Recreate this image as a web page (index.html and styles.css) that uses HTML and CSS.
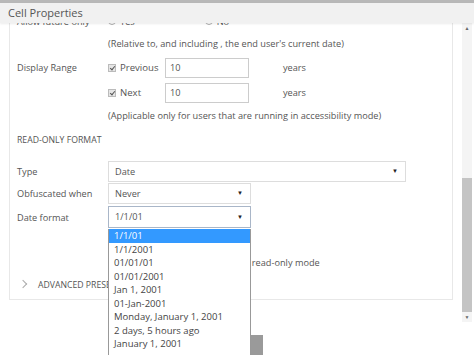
FILE: index.html
```html
<!DOCTYPE html>
<html lang="en">
<head>
    <meta charset="UTF-8">
    <title>Cell Properties</title>
    <link rel="stylesheet" href="styles.css">
</head>
<body>
    <div class="top-strip"></div>
    <div class="dialog-title">Cell Properties</div>

    <div class="main">
        <div class="scroll-area">
            <div class="panel">
                <div class="row row-cut">
                    <div class="label">Allow future only</div>
                    <div class="control">
                        <span class="radio"></span> Yes
                        <span class="radio radio-no"></span> No
                    </div>
                </div>
                <div class="row note">
                    <div class="label"></div>
                    <div class="control">(Relative to, and including , the end user's current date)</div>
                </div>
                <div class="row row-input">
                    <div class="label">Display Range</div>
                    <div class="control">
                        <span class="check"></span>
                        <span class="check-text">Previous</span>
                        <input class="num" type="text" value="10">
                        <span class="unit">years</span>
                    </div>
                </div>
                <div class="row row-input">
                    <div class="label"></div>
                    <div class="control">
                        <span class="check"></span>
                        <span class="check-text">Next</span>
                        <input class="num" type="text" value="10">
                        <span class="unit">years</span>
                    </div>
                </div>
                <div class="row note note-short">
                    <div class="label"></div>
                    <div class="control">(Applicable only for users that are running in accessibility mode)</div>
                </div>
                <div class="row heading">READ-ONLY FORMAT</div>
                <div class="row row-select first-select">
                    <div class="label">Type</div>
                    <div class="control">
                        <div class="select wide">Date <span class="arrow">&#9660;</span></div>
                    </div>
                </div>
                <div class="row row-select">
                    <div class="label">Obfuscated when</div>
                    <div class="control">
                        <div class="select">Never <span class="arrow">&#9660;</span></div>
                    </div>
                </div>
                <div class="row row-select date-row">
                    <div class="label">Date format</div>
                    <div class="control dropdown-host">
                        <div class="select focused">1/1/01 <span class="arrow">&#9660;</span></div>
                        <ul class="dropdown">
                            <li class="selected">1/1/01</li>
                            <li>1/1/2001</li>
                            <li>01/01/01</li>
                            <li>01/01/2001</li>
                            <li>Jan 1, 2001</li>
                            <li>01-Jan-2001</li>
                            <li>Monday, January 1, 2001</li>
                            <li>2 days, 5 hours ago</li>
                            <li>January 1, 2001</li>
                        </ul>
                    </div>
                </div>
                <div class="row row-readonly">
                    <div class="label"></div>
                    <div class="control"><span class="check"></span> Show time zone of end user in read-only mode</div>
                </div>
                <div class="row advanced">
                    <span class="chevron"></span>
                    ADVANCED PRESENTATION
                </div>
            </div>
            <div class="footer">
                <button class="btn"></button>
            </div>
        </div>

        <div class="scrollbar">
            <div class="sb-arrow">&#9650;</div>
            <div class="sb-track"><div class="sb-thumb"></div></div>
            <div class="sb-arrow">&#9660;</div>
        </div>
    </div>
</body>
</html>
```

FILE: styles.css
```css
* {
    margin: 0;
    padding: 0;
    box-sizing: border-box;
}

body {
    font-family: "Open Sans", Arial, sans-serif;
    font-size: 9.2px;
    color: #555;
    background: white;
    width: 474px;
    height: 355px;
    overflow: hidden;
}

.top-strip {
    height: 3px;
    background: #b8b8b8;
}

.dialog-title {
    position: relative;
    z-index: 2;
    height: 20px;
    line-height: 20px;
    padding-left: 8px;
    font-size: 11px;
    color: #555;
    background: #f1f1f1;
    box-shadow: 0 1px 2px rgba(0, 0, 0, 0.08);
}

.main {
    display: flex;
    height: 332px;
}

.scroll-area {
    width: 461px;
    overflow: hidden;
}

.panel {
    margin: -13px 0 0 9px;
    width: 444px;
    border: 1px solid #e8e8e8;
    border-top: none;
    padding-left: 7px;
}

.row {
    display: flex;
    align-items: center;
}

.label {
    width: 91px;
    flex-shrink: 0;
}

.control {
    display: flex;
    align-items: center;
}

.row-cut { height: 22px; }
.note { height: 23px; }
.note-short { height: 20px; }
.row-input { height: 25px; }
.heading { height: 30px; font-size: 8.7px; }
.row-select { height: 23px; }
.first-select { height: 22px; margin-top: 5px; }
.date-row { height: 24px; }

.radio {
    display: inline-block;
    width: 8px;
    height: 8px;
    border: 1px solid #aaa;
    border-radius: 50%;
    margin-right: 4px;
}

.radio-no { margin-left: 70px; }

.check {
    display: inline-block;
    width: 8px;
    height: 8px;
    margin-right: 4px;
    border: 1px solid #bbb;
    background: #e6e6e6;
    position: relative;
}

.check::after {
    content: "";
    position: absolute;
    left: 2px;
    top: 0;
    width: 2px;
    height: 4px;
    border: solid #555;
    border-width: 0 1.5px 1.5px 0;
    transform: rotate(40deg);
}

.check-text {
    min-width: 45px;
    font-size: 9.6px;
}

.num {
    width: 84px;
    height: 20px;
    border: 1px solid #ccc;
    padding-left: 4px;
    font-family: inherit;
    font-size: 9.2px;
    color: #555;
}

.unit {
    margin-left: 34px;
}

.select {
    position: relative;
    width: 143px;
    height: 21px;
    line-height: 19px;
    border: 1px solid #ddd;
    padding-left: 6px;
    color: #555;
}

.select.wide { width: 298px; }

.select.focused {
    height: 22px;
    line-height: 20px;
    border-color: #a9b6c8;
}

.arrow {
    position: absolute;
    right: 7px;
    top: 0;
    font-size: 6px;
    color: #222;
}

.dropdown-host { position: relative; }

.dropdown {
    position: absolute;
    z-index: 3;
    left: 0;
    top: 23px;
    width: 143px;
    padding-bottom: 12px;
    list-style: none;
    background: white;
    border: 1px solid #999;
    border-top: none;
    font-size: 9.5px;
    color: #444;
}

.dropdown li {
    height: 13.5px;
    line-height: 13.5px;
    padding-left: 5px;
}

.dropdown li.selected {
    background: #3399ff;
    color: white;
}

.row-readonly {
    height: 22px;
    margin-top: 22px;
}

.advanced {
    height: 26px;
    font-size: 8.7px;
    color: #555;
    padding: 6px 0 0 3px;
    align-items: flex-start;
}

.chevron {
    display: inline-block;
    width: 6px;
    height: 6px;
    border: solid #aaa;
    border-width: 1px 1px 0 0;
    transform: rotate(45deg);
    margin: 2px 12px 0 0;
}

.footer {
    display: flex;
    padding: 35px 0 0 200px;
}

.btn {
    width: 63px;
    height: 30px;
    border: none;
    background: #9a9a9a;
}

.scrollbar {
    width: 10px;
    margin-left: 1px;
    height: 299px;
    display: flex;
    flex-direction: column;
    background: #f4f4f4;
}

.sb-arrow {
    height: 10px;
    font-size: 5px;
    text-align: center;
    color: #666;
    line-height: 10px;
}

.sb-track {
    flex: 1;
    padding-top: 145px;
}

.sb-thumb {
    height: 134px;
    background: #c4c4c4;
}
```
